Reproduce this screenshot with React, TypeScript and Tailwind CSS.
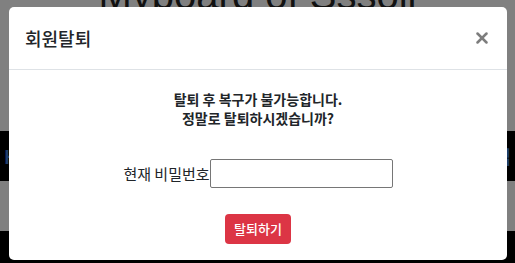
import { X } from "lucide-react";

const KR = "font-['Noto_Sans_CJK_KR','Noto_Sans',sans-serif]";

export default function App() {
  return (
    <div className="relative h-[263px] w-[515px] overflow-hidden bg-[#808080]">
      {/* dimmed page behind the modal */}
      <div className="flex h-full flex-col">
        <h1 className="mt-[-29px] h-[160px] shrink-0 text-center font-['Liberation_Sans',Arial,sans-serif] text-[40px] font-medium leading-[48px] text-[#111]">
          Myboard of Sssoll
        </h1>
        <div className={`flex h-[50px] shrink-0 items-center justify-between bg-black px-[4px] text-[18px] font-bold text-[#1f3d6b] ${KR}`}>
          <span>Home</span>
          <span>편집</span>
        </div>
        <div className="h-[50px] shrink-0" />
        <div className="flex-1 bg-black" />
      </div>

      {/* modal */}
      <div className={`absolute left-[9px] top-[7px] w-[498px] rounded-[5px] bg-white ${KR}`}>
        <div className="flex h-[63px] items-center justify-between border-b border-[#dee2e6] pl-[16px] pr-[16px]">
          <h5 className="text-[18px] font-medium leading-[27px] text-[#212529]">회원탈퇴</h5>
          <X size={18} strokeWidth={3.4} className="text-[#7d7d7d]" />
        </div>
        <div className="flex flex-col items-center pb-[16px] pt-[20px] text-[#212529]">
          <p className="text-center text-[14px] font-bold leading-[19px]">
            탈퇴 후 복구가 불가능합니다.
            <br />
            정말로 탈퇴하시겠습니까?
          </p>
          <div className="mt-[31px] flex items-center">
            <label className="text-[15px] leading-[20px]">현재 비밀번호</label>
            <input
              type="password"
              className="h-[29px] w-[183px] rounded-[2px] border border-[#767676] bg-white px-1 text-[14px]"
            />
          </div>
          <button className="mt-[26px] h-[30px] w-[66px] rounded-[4px] bg-[#dc3545] text-[13px] font-medium leading-[30px] text-white">
            탈퇴하기
          </button>
        </div>
      </div>
    </div>
  );
}
